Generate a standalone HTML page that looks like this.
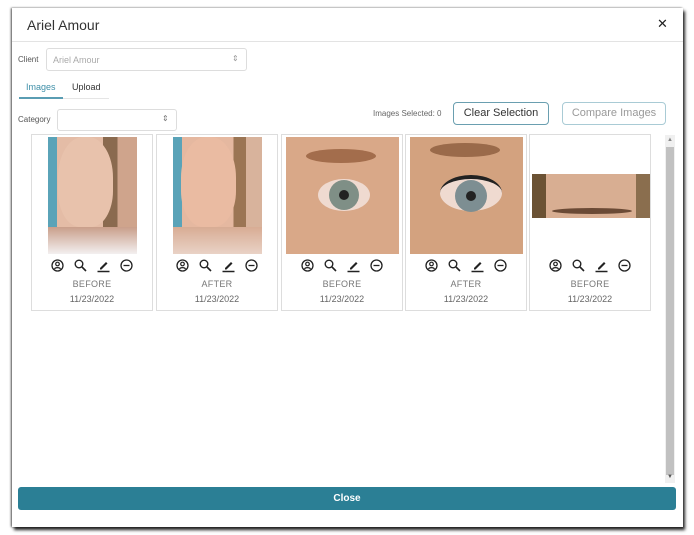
<!DOCTYPE html>
<html><head><style>
*{box-sizing:border-box;margin:0;padding:0}
body{width:694px;height:535px;background:#fff;font-family:"Liberation Sans",sans-serif;position:relative;overflow:hidden}
.modal{position:absolute;left:12px;top:8px;width:671px;height:519px;background:#fff;box-shadow:2px 3px 3px #222, -1px 0 2px #555}
.a{position:absolute}
.title{left:27px;top:17px;font-size:14px;color:#333}
.x{left:657px;top:16px;font-size:13px;color:#222}
.hr{left:12px;top:41px;width:671px;height:1px;background:#e3e3e3}
.lbl{font-size:8px;color:#555}
.sel{border:1px solid #ddd;border-radius:3px;background:#fff}
.card{position:absolute;top:134px;width:122px;height:177px;border:1px solid #ddd;background:#fff}
.icons{position:absolute;top:123px;left:0;width:100%;display:flex;justify-content:center;gap:8px}
.icons svg{width:15px;height:15px}
.t1{position:absolute;top:144px;width:100%;text-align:center;font-size:9px;color:#777;letter-spacing:.3px}
.t2{position:absolute;top:159px;width:100%;text-align:center;font-size:9px;color:#666}
.btn{position:absolute;border:1px solid #6a9fb0;border-radius:4px;font-size:11px;text-align:center;line-height:21px;background:#fff}
</style></head><body>
<div class="modal"></div>
<div class="a title">Ariel Amour</div>
<div class="a x">✕</div>
<div class="a hr"></div>
<div class="a lbl" style="left:18px;top:55px">Client</div>
<div class="a sel" style="left:46px;top:48px;width:201px;height:23px"></div>
<div class="a" style="left:53px;top:55px;font-size:9px;color:#aaa">Ariel Amour</div>
<div class="a" style="left:232px;top:54px;font-size:8px;color:#999">⇕</div>
<div class="a" style="left:26px;top:82px;font-size:9px;color:#3e8fa8">Images</div>
<div class="a" style="left:72px;top:82px;font-size:9px;color:#333">Upload</div>
<div class="a" style="left:19px;top:97px;width:44px;height:2px;background:#5a9db3"></div>
<div class="a" style="left:63px;top:98px;width:46px;height:1px;background:#e5e5e5"></div>
<div class="a lbl" style="left:18px;top:115px">Category</div>
<div class="a sel" style="left:57px;top:109px;width:120px;height:22px"></div>
<div class="a" style="left:162px;top:114px;font-size:8px;color:#777">⇕</div>
<div class="a" style="left:373px;top:109px;font-size:8px;color:#666">Images Selected: 0</div>
<div class="btn" style="left:453px;top:102px;width:96px;height:23px;color:#333">Clear Selection</div>
<div class="btn" style="left:562px;top:102px;width:104px;height:23px;color:#999;border-color:#a9cbd5">Compare Images</div>

<svg width="0" height="0" style="position:absolute"><defs>
<g id="ic">
<circle cx="7.5" cy="7.5" r="5.5" fill="none" stroke="#222" stroke-width="1.3"/><circle cx="7.5" cy="6" r="1.8" fill="none" stroke="#222" stroke-width="1.2"/><path d="M4.5 11c1-1.8 5-1.8 6 0" fill="none" stroke="#222" stroke-width="1.2"/>
</g></defs></svg>

<div class="card" style="left:31px"><div class="a" style="left:16px;top:2px;width:89px;height:117px;background:linear-gradient(90deg,#5aa3b8 0 10%,#e4bca6 10% 62%,#8a6a4f 62% 78%,#cfa48c 78% 100%)"><div class="a" style="left:10px;top:0;width:55px;height:90px;border-radius:45% 45% 40% 40%;background:#e8c2ac"></div><div class="a" style="left:0;top:90px;width:89px;height:27px;background:linear-gradient(180deg,#c99f8a,#f3f0f0)"></div></div>
</div>
<div class="card" style="left:156px"><div class="a" style="left:16px;top:2px;width:89px;height:117px;background:linear-gradient(90deg,#5aa3b8 0 10%,#e5b8a0 10% 68%,#9b7554 68% 82%,#d8b39c 82%)"><div class="a" style="left:8px;top:0;width:55px;height:90px;border-radius:45% 45% 40% 40%;background:#eabba2"></div><div class="a" style="left:0;top:90px;width:89px;height:27px;background:linear-gradient(180deg,#d8ac94,#e9d2c6)"></div></div>
</div>
<div class="card" style="left:281px"><div class="a" style="left:4px;top:2px;width:113px;height:117px;background:#d9a888"><div class="a" style="left:20px;top:12px;width:70px;height:14px;border-radius:50%;background:#a36d4c"></div><div class="a" style="left:32px;top:42px;width:52px;height:32px;border-radius:50%;background:#efdad0"></div><div class="a" style="left:43px;top:43px;width:30px;height:30px;border-radius:50%;background:#7f8f86"></div><div class="a" style="left:53px;top:53px;width:10px;height:10px;border-radius:50%;background:#222"></div></div>
</div>
<div class="card" style="left:405px"><div class="a" style="left:4px;top:2px;width:113px;height:117px;background:#d3a27f"><div class="a" style="left:20px;top:6px;width:70px;height:14px;border-radius:50%;background:#9a6a4a"></div><div class="a" style="left:30px;top:38px;width:62px;height:36px;border-radius:50%;background:#efdad0;border-top:4px solid #222"></div><div class="a" style="left:45px;top:43px;width:32px;height:32px;border-radius:50%;background:#7d8e92"></div><div class="a" style="left:56px;top:54px;width:10px;height:10px;border-radius:50%;background:#222"></div></div>
</div>
<div class="card" style="left:529px"><div class="a" style="left:2px;top:39px;width:118px;height:44px;background:linear-gradient(90deg,#6b5234 0 12%,#d8ae92 12% 88%,#8a6e4e 88%)"><div class="a" style="left:20px;top:34px;width:80px;height:6px;background:#6b4a35;border-radius:50%"></div></div>
</div>

<div class="a" style="left:665px;top:135px;width:10px;height:348px;background:#f0f0f0"></div>
<div class="a" style="left:666px;top:147px;width:8px;height:328px;background:#c1c1c1"></div>
<div class="a" style="left:667px;top:137px;font-size:6px;color:#888">▲</div>
<div class="a" style="left:667px;top:474px;font-size:6px;color:#555">▼</div>

<div class="a" style="left:18px;top:487px;width:658px;height:23px;background:#2b7f95;border-radius:3px;color:#fff;font-weight:bold;font-size:10px;text-align:center;line-height:23px">Close</div>

<script>
var T=["BEFORE","AFTER","BEFORE","AFTER","BEFORE"];
document.querySelectorAll('.card').forEach(function(c,i){
c.insertAdjacentHTML('beforeend','<div class="icons"><svg viewBox="0 0 15 15"><use href="#ic"/></svg><svg viewBox="0 0 15 15"><circle cx="6" cy="6" r="3.8" fill="none" stroke="#222" stroke-width="1.4"/><path d="M9 9l4 4" stroke="#222" stroke-width="1.6"/></svg><svg viewBox="0 0 15 15"><path d="M4 10l6-6 1.5 1.5-6 6H4z" fill="#222"/><path d="M1.5 13.5h12" stroke="#222" stroke-width="1.5"/></svg><svg viewBox="0 0 15 15"><circle cx="7.5" cy="7.5" r="5.5" fill="none" stroke="#222" stroke-width="1.3"/><path d="M4.5 7.5h6" stroke="#222" stroke-width="1.3"/></svg></div><div class="t1">'+T[i]+'</div><div class="t2">11/23/2022</div>');
});
</script>
</body></html>
